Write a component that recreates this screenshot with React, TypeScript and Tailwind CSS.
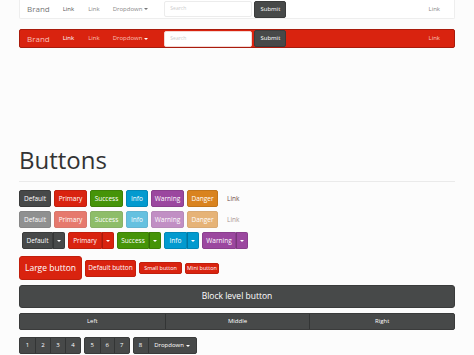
import React from "react";

type Tone = "default" | "primary" | "success" | "info" | "warning" | "danger";

// Simplex palette
const TONES: Record<Tone, string> = {
  default: "bg-[#474949] border-[#3a3b3b]",
  primary: "bg-[#d9230f] border-[#c11f0d]",
  success: "bg-[#469408] border-[#3d8007]",
  info: "bg-[#029acf] border-[#0287b6]",
  warning: "bg-[#9b479f] border-[#8a3f8d]",
  danger: "bg-[#d9831f] border-[#c2751b]",
};

const SPLIT_LINE: Record<Tone, string> = {
  default: "border-[#333535]",
  primary: "border-[#a91b0c]",
  success: "border-[#336b06]",
  info: "border-[#0275a0]",
  warning: "border-[#783779]",
  danger: "border-[#a96418]",
};

const ROW: { tone: Tone; label: string; w: string }[] = [
  { tone: "default", label: "Default", w: "w-[32px]" },
  { tone: "primary", label: "Primary", w: "w-[33px]" },
  { tone: "success", label: "Success", w: "w-[33px]" },
  { tone: "info", label: "Info", w: "w-[22px]" },
  { tone: "warning", label: "Warning", w: "w-[33px]" },
  { tone: "danger", label: "Danger", w: "w-[31px]" },
];

const SPLITS: { tone: Tone; label: string; w: string }[] = [
  { tone: "default", label: "Default", w: "w-[31px]" },
  { tone: "primary", label: "Primary", w: "w-[34px]" },
  { tone: "success", label: "Success", w: "w-[32px]" },
  { tone: "info", label: "Info", w: "w-[23px]" },
  { tone: "warning", label: "Warning", w: "w-[34px]" },
];

function Caret({ dark = false }: { dark?: boolean }) {
  return (
    <span
      className={`inline-block h-0 w-0 border-x-[2.5px] border-t-[2.5px] border-x-transparent ${
        dark ? "border-t-[#777]" : "border-t-white"
      }`}
    />
  );
}

function Navbar({ inverse = false }: { inverse?: boolean }) {
  const link = inverse ? "text-[#fac0b8]" : "text-[#888]";
  const active = inverse ? "text-white" : "text-[#555]";
  return (
    <nav
      className={
        inverse
          ? "mt-[10px] flex h-[19px] items-center rounded-[2px] border border-[#a91b0c] bg-[#d9230f]"
          : "flex h-[19px] items-center rounded-b-[2px] border border-t-0 border-[#eee] bg-white"
      }
    >
      <span className={`pl-[7px] pr-[6px] text-[8px] ${inverse ? "text-[#fac0b8]" : "text-[#777]"}`}>Brand</span>
      <span className={`px-[7px] text-[6px] ${active}`}>Link</span>
      <span className={`px-[7px] text-[6px] ${link}`}>Link</span>
      <span className={`flex items-center gap-[2px] px-[6px] text-[6px] ${link}`}>
        Dropdown <Caret dark={!inverse} />
      </span>
      <span
        className={`ml-[10px] flex h-[16px] w-[88px] items-center rounded-[2px] border bg-white pl-[5px] text-[5px] text-[#ccc] ${
          inverse ? "border-[#f3d6d2]" : "border-[#ececec]"
        }`}
      >
        Search
      </span>
      <span className="ml-[2px] flex h-[17px] w-[32px] items-center justify-center rounded-[2px] border border-[#3a3b3b] bg-[#474949] text-[6px] text-white">
        Submit
      </span>
      <span className={`ml-auto pr-[14px] text-[6px] ${inverse ? "text-[#fac0b8]" : "text-[#888]"}`}>Link</span>
    </nav>
  );
}

function ButtonRow({ faded = false }: { faded?: boolean }) {
  return (
    <div className={`flex h-[17px] gap-[3px] ${faded ? "opacity-60" : ""}`}>
      {ROW.map((b) => (
        <span
          key={b.label}
          className={`flex h-[17px] items-center justify-center rounded-[2px] border text-[6.5px] text-white ${b.w} ${TONES[b.tone]}`}
        >
          {b.label}
        </span>
      ))}
      <span className="flex items-center px-[6px] text-[6.5px] text-[#6b4a46]">Link</span>
    </div>
  );
}

export default function App() {
  return (
    <div className="min-h-[355px] w-[474px] overflow-hidden bg-[#fcfcfc] px-[19px] font-['Open_Sans',sans-serif]">
      <Navbar />
      <Navbar inverse />

      <h1 className="mt-[100px] text-[24px] font-normal leading-none text-[#333]">Buttons</h1>
      <div className="mt-[9px] border-b border-[#eaeaea]" />

      <div className="mt-[8px] flex flex-col gap-[4px]">
        <ButtonRow />
        <ButtonRow faded />

        <div className="ml-[3px] flex h-[17px] gap-[3px]">
          {SPLITS.map((b) => (
            <div key={b.label} className="flex">
              <span
                className={`flex h-[17px] items-center justify-center rounded-l-[2px] border text-[6.5px] text-white ${b.w} ${TONES[b.tone]}`}
              >
                {b.label}
              </span>
              <span
                className={`flex h-[17px] w-[12px] items-center justify-center rounded-r-[2px] border border-l-0 ${TONES[b.tone]}`}
              >
                <span className={`flex h-full w-full items-center justify-center border-l ${SPLIT_LINE[b.tone]}`}>
                  <Caret />
                </span>
              </span>
            </div>
          ))}
        </div>
      </div>

      <div className="mt-[7px] flex items-center gap-[3px]">
        <span className="flex h-[24px] w-[63px] items-center justify-center rounded-[3px] border border-[#c11f0d] bg-[#d9230f] text-[8.5px] text-white">
          Large button
        </span>
        <span className="flex h-[17px] w-[51px] items-center justify-center rounded-[2px] border border-[#c11f0d] bg-[#d9230f] text-[6.5px] text-white">
          Default button
        </span>
        <span className="flex h-[12px] w-[43px] items-center justify-center rounded-[2px] border border-[#c11f0d] bg-[#d9230f] text-[5.5px] text-white">
          Small button
        </span>
        <span className="flex h-[11px] w-[34px] items-center justify-center rounded-[2px] border border-[#c11f0d] bg-[#d9230f] text-[5.5px] text-white">
          Mini button
        </span>
      </div>

      <div className="mt-[5px] flex h-[23px] items-center justify-center rounded-[3px] border border-[#3a3b3b] bg-[#474949] text-[8.5px] text-white">
        Block level button
      </div>

      <div className="mt-[5px] grid h-[17px] grid-cols-3 overflow-hidden rounded-[2px] border border-[#3a3b3b] bg-[#474949] text-[6px] text-white">
        <span className="flex items-center justify-center">Left</span>
        <span className="flex items-center justify-center border-l border-[#333535]">Middle</span>
        <span className="flex items-center justify-center border-l border-[#333535]">Right</span>
      </div>

      <div className="mt-[7px] flex gap-[3px] text-[6px] text-white">
        <div className="flex h-[17px] overflow-hidden rounded-[2px] border border-[#3a3b3b] bg-[#474949]">
          {["1", "2", "3", "4"].map((n, i) => (
            <span key={n} className={`flex w-[15px] items-center justify-center ${i ? "border-l border-[#333535]" : ""}`}>
              {n}
            </span>
          ))}
        </div>
        <div className="flex h-[17px] overflow-hidden rounded-[2px] border border-[#3a3b3b] bg-[#474949]">
          {["5", "6", "7"].map((n, i) => (
            <span key={n} className={`flex w-[14.5px] items-center justify-center ${i ? "border-l border-[#333535]" : ""}`}>
              {n}
            </span>
          ))}
        </div>
        <div className="flex h-[17px] overflow-hidden rounded-[2px] border border-[#3a3b3b] bg-[#474949]">
          <span className="flex w-[14px] items-center justify-center">8</span>
          <span className="flex w-[48px] items-center justify-center gap-[2px] border-l border-[#333535]">
            Dropdown <Caret />
          </span>
        </div>
      </div>
    </div>
  );
}
